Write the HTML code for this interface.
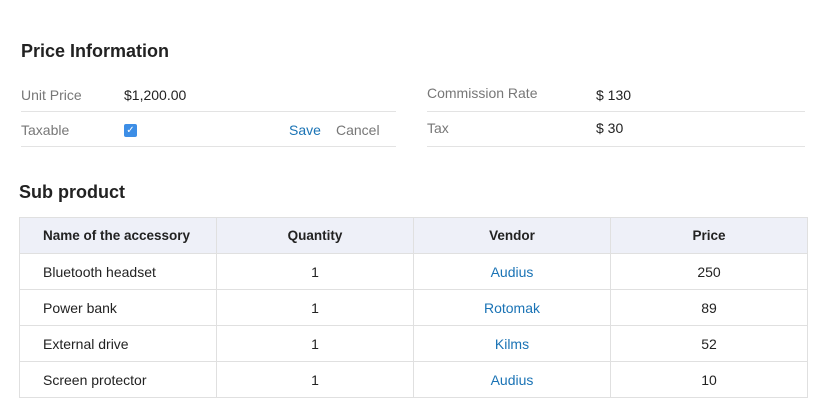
<!DOCTYPE html>
<html><head><style>
body{margin:0;width:830px;height:420px;background:#fff;font-family:"Liberation Sans",sans-serif;position:relative;overflow:hidden;color:#222}
.a{position:absolute;white-space:nowrap}
.lbl{color:#777;font-size:14px}
.val{color:#222;font-size:14px}
.hr{position:absolute;height:1px;background:#e3e3e3}
.blue{color:#1a73b5}
table{position:absolute;left:19px;top:217px;width:788px;border-collapse:collapse;font-size:14px;table-layout:fixed}
td,th{border:1px solid #e0e0e0;height:35px;padding:0;text-align:center}
th{background:#eef0f8;font-weight:bold;height:35px;font-size:13.5px}
td:first-child,th:first-child{text-align:left;padding-left:23px}
</style></head><body>
<div class="a" style="left:21px;top:41px;font-size:18px;font-weight:bold">Price Information</div>
<div class="a lbl" style="left:21px;top:87px">Unit Price</div>
<div class="a val" style="left:124px;top:87px">$1,200.00</div>
<div class="hr" style="left:21px;top:111px;width:375px"></div>
<div class="a lbl" style="left:21px;top:122px">Taxable</div>
<div class="a" style="left:124px;top:124px;width:13px;height:13px;background:#3d8ee6;border-radius:2px;color:#fff;font-size:10px;line-height:13px;text-align:center">✓</div>
<div class="a blue" style="left:289px;top:122px;font-size:14px">Save</div>
<div class="a lbl" style="left:336px;top:122px">Cancel</div>
<div class="hr" style="left:21px;top:146px;width:375px"></div>
<div class="a lbl" style="left:427px;top:85px">Commission Rate</div>
<div class="a val" style="left:596px;top:87px">$ 130</div>
<div class="hr" style="left:427px;top:111px;width:378px"></div>
<div class="a lbl" style="left:427px;top:120px">Tax</div>
<div class="a val" style="left:596px;top:120px">$ 30</div>
<div class="hr" style="left:427px;top:146px;width:378px"></div>
<div class="a" style="left:19px;top:182px;font-size:18px;font-weight:bold">Sub product</div>
<table>
<colgroup><col style="width:197px"><col style="width:197px"><col style="width:197px"><col style="width:197px"></colgroup>
<tr><th>Name of the accessory</th><th>Quantity</th><th>Vendor</th><th>Price</th></tr>
<tr><td>Bluetooth headset</td><td>1</td><td class="blue">Audius</td><td>250</td></tr>
<tr><td>Power bank</td><td>1</td><td class="blue">Rotomak</td><td>89</td></tr>
<tr><td>External drive</td><td>1</td><td class="blue">Kilms</td><td>52</td></tr>
<tr><td>Screen protector</td><td>1</td><td class="blue">Audius</td><td>10</td></tr>
</table>
</body></html>
